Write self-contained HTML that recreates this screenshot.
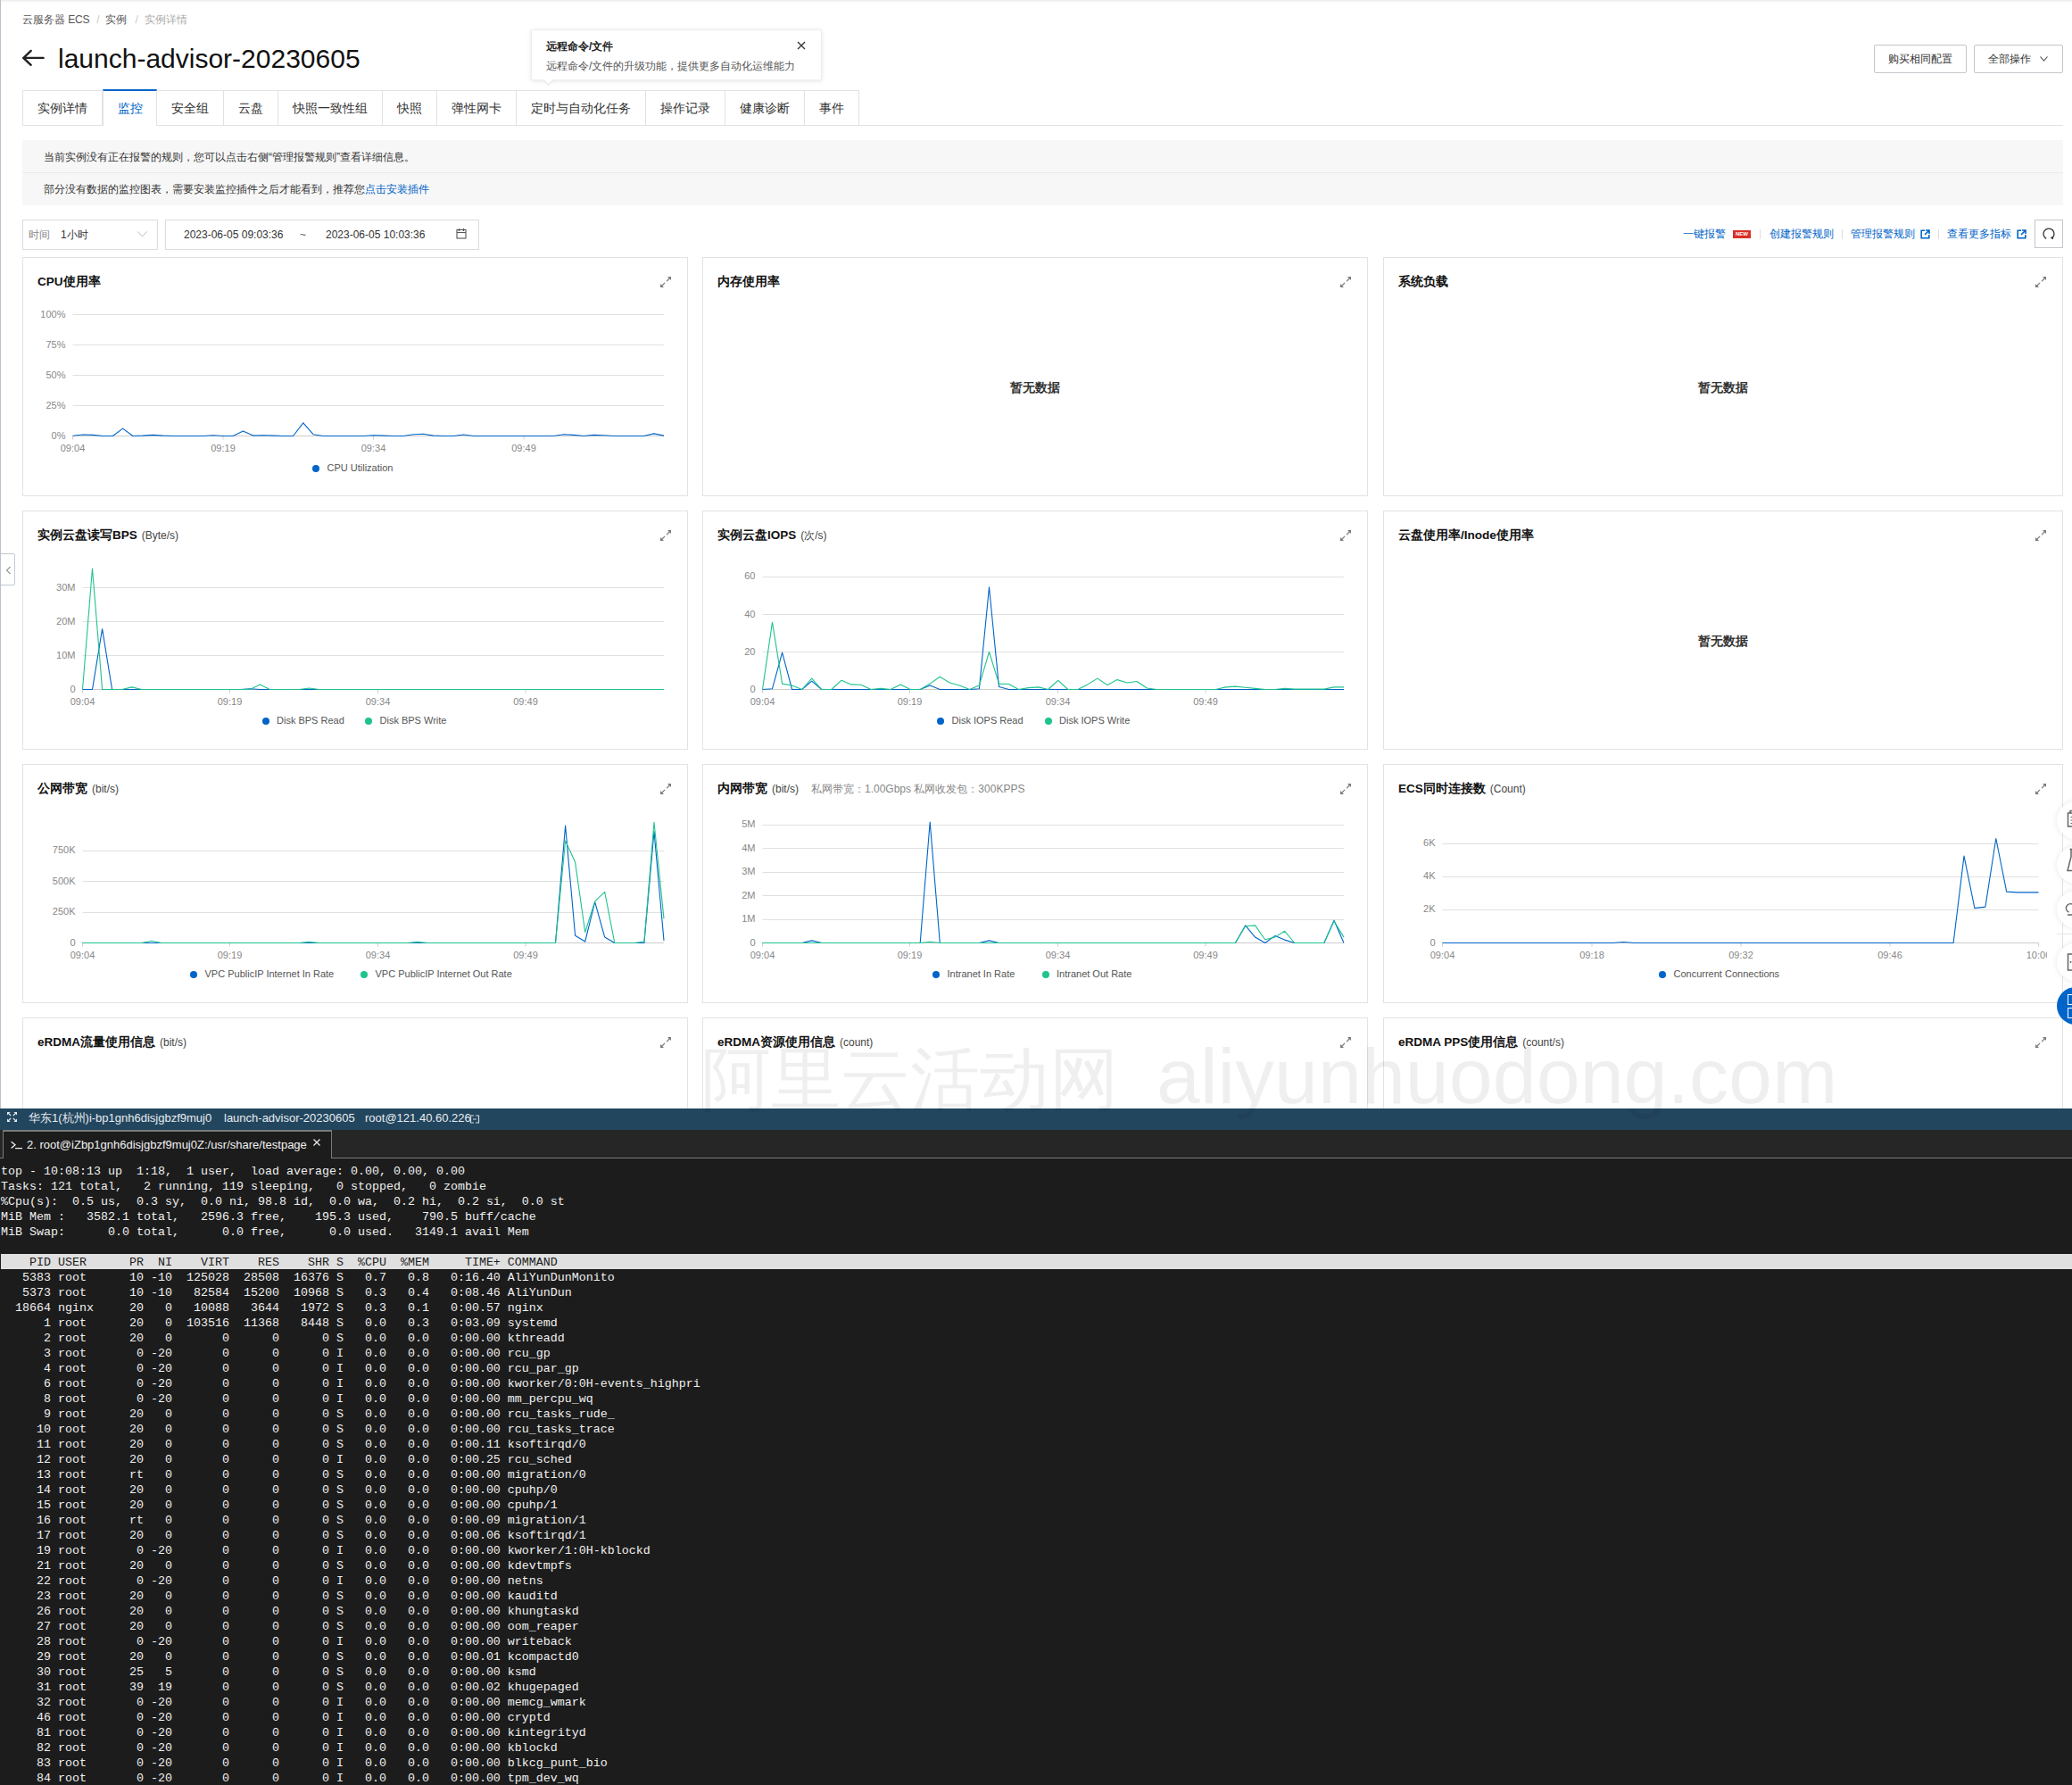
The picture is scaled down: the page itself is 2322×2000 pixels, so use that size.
<!DOCTYPE html><html><head><meta charset="utf-8"><title>ECS</title><style>
*{box-sizing:border-box}
html,body{margin:0;padding:0;width:2322px;height:2000px;overflow:hidden;background:#fff;font-family:"Liberation Sans",sans-serif;color:#333}
.a{position:absolute;white-space:nowrap}
.card{position:absolute;border:1px solid #e3e3e3;background:#fff}
.ct{position:absolute;left:14px;top:19px;font-size:13.5px;font-weight:bold;color:#111;line-height:16px;white-space:nowrap}
.ct span{font-weight:normal;font-size:12px;color:#444;margin-left:5px}
.ex{position:absolute;width:12px;height:12px}
.nd{position:absolute;font-size:14px;font-weight:bold;color:#333;line-height:16px;white-space:nowrap}
.yl{position:absolute;font-size:11px;color:#888;text-align:right;line-height:12px;width:40px}
.xl{position:absolute;font-size:11px;color:#888;line-height:12px;width:50px;text-align:center}
.lg{position:absolute;font-size:11px;color:#555;line-height:12px;white-space:nowrap}
.dot{display:inline-block;width:8px;height:8px;border-radius:50%;vertical-align:-1px;margin-right:8.5px}
.tab{position:absolute;top:101px;height:39px;border:1px solid #e2e2e2;border-bottom:none;background:#fff;font-size:14px;color:#333;text-align:center;line-height:38px}
.term{position:absolute;left:1px;top:1303px;font-family:"Liberation Mono",monospace;font-size:13.33px;line-height:17px;color:#f0f0f0;white-space:pre}
</style></head><body>
<div class="a" style="left:0;top:0;width:1px;height:1242px;background:#bcc1cb"></div>
<div class="a" style="left:1px;top:0;width:2321px;height:3px;background:linear-gradient(#ececec,#fff)"></div>
<div class="a" style="left:25px;top:15px;font-size:12px;line-height:14px;color:#555">云服务器 <span style="letter-spacing:-0.3px">ECS</span><span style="color:#c8c8c8;margin:0 7px 0 8px">/</span>实例<span style="color:#c8c8c8;margin:0 7px 0 9px">/</span><span style="color:#aaa">实例详情</span></div>
<svg class="a" style="left:20px;top:50px" width="40" height="32" viewBox="0 0 40 32"><path d="M28.6 14.9H6.5M14.7 6.9L6.3 14.9l8.4 7.9" fill="none" stroke="#222" stroke-width="2.4" stroke-linecap="round" stroke-linejoin="miter"/></svg>
<div class="a" style="left:65px;top:48px;font-size:30px;line-height:36px;color:#111">launch-advisor-20230605</div>
<div class="a" style="left:595px;top:33px;width:326px;height:57px;background:#fff;border:1px solid #eeeeee;box-shadow:0 1px 5px rgba(0,0,0,.10)"></div>
<div class="a" style="left:610px;top:85px;width:9px;height:9px;background:#fff;border-right:1px solid #dde0e4;border-bottom:1px solid #dde0e4;transform:rotate(45deg)"></div>
<div class="a" style="left:612px;top:45px;font-size:12px;font-weight:bold;color:#222;line-height:14px">远程命令/文件</div>
<div class="a" style="left:612px;top:66.5px;font-size:12px;color:#555;line-height:14px">远程命令/文件的升级功能，提供更多自动化运维能力</div>
<svg class="a" style="left:893px;top:46px" width="10" height="10" viewBox="0 0 10 10"><path d="M1 1L9 9M9 1L1 9" stroke="#333" stroke-width="1.3"/></svg>
<div class="a" style="left:2100px;top:50px;width:104px;height:32px;border:1px solid #c4c6cc;border-radius:2px;font-size:12px;line-height:30px;text-align:center;color:#333">购买相同配置</div>
<div class="a" style="left:2212px;top:50px;width:100px;height:32px;border:1px solid #c4c6cc;border-radius:2px;font-size:12px;line-height:30px;color:#333;padding-left:15px">全部操作<svg style="position:absolute;left:73px;top:12px" width="9" height="6" viewBox="0 0 9 6"><path d="M.5.5L4.5 5 8.5.5" fill="none" stroke="#444" stroke-width="1.1"/></svg></div>
<div class="a" style="left:25px;top:140px;width:2287px;height:1px;background:#e2e2e2"></div>
<div class="tab" style="left:25px;width:90px">实例详情</div>
<div class="tab" style="left:115px;width:61px;color:#0064c8;border-top:2px solid #0064c8;top:100px;height:41px;z-index:2">监控</div>
<div class="tab" style="left:175px;width:76px">安全组</div>
<div class="tab" style="left:250px;width:62px">云盘</div>
<div class="tab" style="left:311px;width:118px">快照一致性组</div>
<div class="tab" style="left:428px;width:62px">快照</div>
<div class="tab" style="left:489px;width:90px">弹性网卡</div>
<div class="tab" style="left:578px;width:146px">定时与自动化任务</div>
<div class="tab" style="left:723px;width:90px">操作记录</div>
<div class="tab" style="left:812px;width:90px">健康诊断</div>
<div class="tab" style="left:901px;width:62px">事件</div>
<div class="a" style="left:25px;top:157px;width:2287px;height:73px;background:#f7f7f7"></div>
<div class="a" style="left:25px;top:193px;width:2287px;height:1px;background:#e9e9e9"></div>
<div class="a" style="left:49px;top:169px;font-size:12px;line-height:14px;color:#333">当前实例没有正在报警的规则，您可以点击右侧“管理报警规则”查看详细信息。</div>
<div class="a" style="left:49px;top:205px;font-size:12px;line-height:14px;color:#333">部分没有数据的监控图表，需要安装监控插件之后才能看到，推荐您<span style="color:#0064c8">点击安装插件</span></div>
<div class="a" style="left:25px;top:246px;width:152px;height:34px;border:1px solid #dcdcdc"></div>
<div class="a" style="left:32px;top:256px;font-size:12px;line-height:14px;color:#888">时间</div>
<div class="a" style="left:68px;top:256px;font-size:12px;line-height:14px;color:#333">1小时</div>
<svg class="a" style="left:154px;top:259px" width="11" height="7" viewBox="0 0 11 7"><path d="M.5.5l5 5.5 5-5.5" fill="none" stroke="#bbb" stroke-width="1"/></svg>
<div class="a" style="left:185px;top:246px;width:352px;height:34px;border:1px solid #dcdcdc"></div>
<div class="a" style="left:206px;top:256px;font-size:12px;line-height:14px;color:#333">2023-06-05 09:03:36</div>
<div class="a" style="left:336px;top:256px;font-size:12px;line-height:14px;color:#555">~</div>
<div class="a" style="left:365px;top:256px;font-size:12px;line-height:14px;color:#333">2023-06-05 10:03:36</div>
<svg class="a" style="left:511px;top:255px" width="12" height="13" viewBox="0 0 12 13"><rect x="1" y="2.5" width="10" height="9.5" fill="none" stroke="#555" stroke-width="1.1"/><path d="M1 5.5h10M3.5 1v3M8.5 1v3" stroke="#555" stroke-width="1.1"/></svg>
<div class="a" style="left:1886px;top:255px;font-size:12px;line-height:14px;color:#0064c8">一键报警</div>
<div class="a" style="left:1942px;top:258px;width:20px;height:9px;background:#d93026;color:#fff;font-size:6px;line-height:9px;text-align:center;font-weight:bold">NEW</div>
<div class="a" style="left:1972px;top:257px;width:1px;height:11px;background:#ddd"></div>
<div class="a" style="left:1983px;top:255px;font-size:12px;line-height:14px;color:#0064c8">创建报警规则</div>
<div class="a" style="left:2064px;top:257px;width:1px;height:11px;background:#ddd"></div>
<div class="a" style="left:2074px;top:255px;font-size:12px;line-height:14px;color:#0064c8">管理报警规则</div>
<svg class="a" style="left:2152px;top:257px" width="11" height="11" viewBox="0 0 11 11"><path d="M5 1.2H1.2v8.6h8.6V6" fill="none" stroke="#0064c8" stroke-width="1.6"/><path d="M6 1h4v4M10 1L5 6" fill="none" stroke="#0064c8" stroke-width="1.6"/></svg>
<div class="a" style="left:2172px;top:257px;width:1px;height:11px;background:#ddd"></div>
<div class="a" style="left:2182px;top:255px;font-size:12px;line-height:14px;color:#0064c8">查看更多指标</div>
<svg class="a" style="left:2260px;top:257px" width="11" height="11" viewBox="0 0 11 11"><path d="M5 1.2H1.2v8.6h8.6V6" fill="none" stroke="#0064c8" stroke-width="1.6"/><path d="M6 1h4v4M10 1L5 6" fill="none" stroke="#0064c8" stroke-width="1.6"/></svg>
<div class="a" style="left:2280px;top:246px;width:32px;height:32px;border:1px solid #c4c6cc"></div>
<svg class="a" style="left:2289px;top:255px" width="14" height="14" viewBox="0 0 14 14"><path d="M4.2 12.4A6 6 0 1 1 10.6 11.9" fill="none" stroke="#333" stroke-width="1.3"/><path d="M8.6 11.6L11.8 13.2 12 9.6Z" fill="#333"/></svg>
<div class="card" style="left:25px;top:288px;width:746px;height:268px"></div>
<div class="ct" style="left:42px;top:308px">CPU使用率</div>
<svg class="a" style="left:740px;top:310px" width="12" height="12" viewBox="0 0 12 12"><path d="M8 0H12V4ZM0 8V12H4Z" fill="#7a7a7a"/><path d="M11 1L7.4 4.8M1 11L4.8 7.2" stroke="#7a7a7a" stroke-width="1.2" stroke-linecap="round"/></svg>
<div class="card" style="left:787px;top:288px;width:746px;height:268px"></div>
<div class="ct" style="left:804px;top:308px">内存使用率</div>
<svg class="a" style="left:1502px;top:310px" width="12" height="12" viewBox="0 0 12 12"><path d="M8 0H12V4ZM0 8V12H4Z" fill="#7a7a7a"/><path d="M11 1L7.4 4.8M1 11L4.8 7.2" stroke="#7a7a7a" stroke-width="1.2" stroke-linecap="round"/></svg>
<div class="card" style="left:1550px;top:288px;width:762px;height:268px"></div>
<div class="ct" style="left:1567px;top:308px">系统负载</div>
<svg class="a" style="left:2281px;top:310px" width="12" height="12" viewBox="0 0 12 12"><path d="M8 0H12V4ZM0 8V12H4Z" fill="#7a7a7a"/><path d="M11 1L7.4 4.8M1 11L4.8 7.2" stroke="#7a7a7a" stroke-width="1.2" stroke-linecap="round"/></svg>
<div class="card" style="left:25px;top:572px;width:746px;height:268px"></div>
<div class="ct" style="left:42px;top:592px">实例云盘读写BPS<span>(Byte/s)</span></div>
<svg class="a" style="left:740px;top:594px" width="12" height="12" viewBox="0 0 12 12"><path d="M8 0H12V4ZM0 8V12H4Z" fill="#7a7a7a"/><path d="M11 1L7.4 4.8M1 11L4.8 7.2" stroke="#7a7a7a" stroke-width="1.2" stroke-linecap="round"/></svg>
<div class="card" style="left:787px;top:572px;width:746px;height:268px"></div>
<div class="ct" style="left:804px;top:592px">实例云盘IOPS<span>(次/s)</span></div>
<svg class="a" style="left:1502px;top:594px" width="12" height="12" viewBox="0 0 12 12"><path d="M8 0H12V4ZM0 8V12H4Z" fill="#7a7a7a"/><path d="M11 1L7.4 4.8M1 11L4.8 7.2" stroke="#7a7a7a" stroke-width="1.2" stroke-linecap="round"/></svg>
<div class="card" style="left:1550px;top:572px;width:762px;height:268px"></div>
<div class="ct" style="left:1567px;top:592px">云盘使用率/Inode使用率</div>
<svg class="a" style="left:2281px;top:594px" width="12" height="12" viewBox="0 0 12 12"><path d="M8 0H12V4ZM0 8V12H4Z" fill="#7a7a7a"/><path d="M11 1L7.4 4.8M1 11L4.8 7.2" stroke="#7a7a7a" stroke-width="1.2" stroke-linecap="round"/></svg>
<div class="card" style="left:25px;top:856px;width:746px;height:268px"></div>
<div class="ct" style="left:42px;top:876px">公网带宽<span>(bit/s)</span></div>
<svg class="a" style="left:740px;top:878px" width="12" height="12" viewBox="0 0 12 12"><path d="M8 0H12V4ZM0 8V12H4Z" fill="#7a7a7a"/><path d="M11 1L7.4 4.8M1 11L4.8 7.2" stroke="#7a7a7a" stroke-width="1.2" stroke-linecap="round"/></svg>
<div class="card" style="left:787px;top:856px;width:746px;height:268px"></div>
<div class="ct" style="left:804px;top:876px">内网带宽<span>(bit/s)</span><span style="margin-left:14px;color:#888">私网带宽：1.00Gbps 私网收发包：300KPPS</span></div>
<svg class="a" style="left:1502px;top:878px" width="12" height="12" viewBox="0 0 12 12"><path d="M8 0H12V4ZM0 8V12H4Z" fill="#7a7a7a"/><path d="M11 1L7.4 4.8M1 11L4.8 7.2" stroke="#7a7a7a" stroke-width="1.2" stroke-linecap="round"/></svg>
<div class="card" style="left:1550px;top:856px;width:762px;height:268px"></div>
<div class="ct" style="left:1567px;top:876px">ECS同时连接数<span>(Count)</span></div>
<svg class="a" style="left:2281px;top:878px" width="12" height="12" viewBox="0 0 12 12"><path d="M8 0H12V4ZM0 8V12H4Z" fill="#7a7a7a"/><path d="M11 1L7.4 4.8M1 11L4.8 7.2" stroke="#7a7a7a" stroke-width="1.2" stroke-linecap="round"/></svg>
<div class="card" style="left:25px;top:1140px;width:746px;height:268px"></div>
<div class="ct" style="left:42px;top:1160px">eRDMA流量使用信息<span>(bit/s)</span></div>
<svg class="a" style="left:740px;top:1162px" width="12" height="12" viewBox="0 0 12 12"><path d="M8 0H12V4ZM0 8V12H4Z" fill="#7a7a7a"/><path d="M11 1L7.4 4.8M1 11L4.8 7.2" stroke="#7a7a7a" stroke-width="1.2" stroke-linecap="round"/></svg>
<div class="card" style="left:787px;top:1140px;width:746px;height:268px"></div>
<div class="ct" style="left:804px;top:1160px">eRDMA资源使用信息<span>(count)</span></div>
<svg class="a" style="left:1502px;top:1162px" width="12" height="12" viewBox="0 0 12 12"><path d="M8 0H12V4ZM0 8V12H4Z" fill="#7a7a7a"/><path d="M11 1L7.4 4.8M1 11L4.8 7.2" stroke="#7a7a7a" stroke-width="1.2" stroke-linecap="round"/></svg>
<div class="card" style="left:1550px;top:1140px;width:762px;height:268px"></div>
<div class="ct" style="left:1567px;top:1160px">eRDMA PPS使用信息<span>(count/s)</span></div>
<svg class="a" style="left:2281px;top:1162px" width="12" height="12" viewBox="0 0 12 12"><path d="M8 0H12V4ZM0 8V12H4Z" fill="#7a7a7a"/><path d="M11 1L7.4 4.8M1 11L4.8 7.2" stroke="#7a7a7a" stroke-width="1.2" stroke-linecap="round"/></svg>
<div class="nd" style="left:1120px;top:426px;width:80px;text-align:center">暂无数据</div>
<div class="nd" style="left:1891px;top:426px;width:80px;text-align:center">暂无数据</div>
<div class="nd" style="left:1891px;top:710px;width:80px;text-align:center">暂无数据</div>
<div class="yl" style="left:33.5px;top:345.5px">100%</div>
<div class="yl" style="left:33.5px;top:379.5px">75%</div>
<div class="yl" style="left:33.5px;top:413.5px">50%</div>
<div class="yl" style="left:33.5px;top:447.5px">25%</div>
<div class="yl" style="left:33.5px;top:481.5px">0%</div>
<div class="xl" style="left:56.5px;top:495.5px">09:04</div>
<div class="xl" style="left:225px;top:495.5px">09:19</div>
<div class="xl" style="left:393.5px;top:495.5px">09:34</div>
<div class="xl" style="left:562px;top:495.5px">09:49</div>
<div class="lg" style="left:350px;top:518px"><span class="dot" style="background:#0064c8"></span>CPU Utilization</div>
<div class="yl" style="left:44.5px;top:651.5px">30M</div>
<div class="yl" style="left:44.5px;top:689.5px">20M</div>
<div class="yl" style="left:44.5px;top:727.5px">10M</div>
<div class="yl" style="left:44.5px;top:765.5px">0</div>
<div class="xl" style="left:67.5px;top:779.5px">09:04</div>
<div class="xl" style="left:232.5px;top:779.5px">09:19</div>
<div class="xl" style="left:398.5px;top:779.5px">09:34</div>
<div class="xl" style="left:564px;top:779.5px">09:49</div>
<div class="lg" style="left:293.5px;top:801px"><span class="dot" style="background:#0064c8"></span>Disk BPS Read</div>
<div class="lg" style="left:409px;top:801px"><span class="dot" style="background:#1fc38f"></span>Disk BPS Write</div>
<div class="yl" style="left:806.5px;top:639px">60</div>
<div class="yl" style="left:806.5px;top:681.5px">40</div>
<div class="yl" style="left:806.5px;top:723.5px">20</div>
<div class="yl" style="left:806.5px;top:765.5px">0</div>
<div class="xl" style="left:829.5px;top:779.5px">09:04</div>
<div class="xl" style="left:994.5px;top:779.5px">09:19</div>
<div class="xl" style="left:1160.5px;top:779.5px">09:34</div>
<div class="xl" style="left:1326px;top:779.5px">09:49</div>
<div class="lg" style="left:1050px;top:801px"><span class="dot" style="background:#0064c8"></span>Disk IOPS Read</div>
<div class="lg" style="left:1170.5px;top:801px"><span class="dot" style="background:#1fc38f"></span>Disk IOPS Write</div>
<div class="yl" style="left:44.5px;top:946px">750K</div>
<div class="yl" style="left:44.5px;top:980.5px">500K</div>
<div class="yl" style="left:44.5px;top:1015px">250K</div>
<div class="yl" style="left:44.5px;top:1049.5px">0</div>
<div class="xl" style="left:67.5px;top:1063.5px">09:04</div>
<div class="xl" style="left:232.5px;top:1063.5px">09:19</div>
<div class="xl" style="left:398.5px;top:1063.5px">09:34</div>
<div class="xl" style="left:564px;top:1063.5px">09:49</div>
<div class="lg" style="left:213px;top:1085px"><span class="dot" style="background:#0064c8"></span>VPC PublicIP Internet In Rate</div>
<div class="lg" style="left:404px;top:1085px"><span class="dot" style="background:#1fc38f"></span>VPC PublicIP Internet Out Rate</div>
<div class="yl" style="left:806.5px;top:917px">5M</div>
<div class="yl" style="left:806.5px;top:943.5px">4M</div>
<div class="yl" style="left:806.5px;top:970px">3M</div>
<div class="yl" style="left:806.5px;top:996.5px">2M</div>
<div class="yl" style="left:806.5px;top:1023px">1M</div>
<div class="yl" style="left:806.5px;top:1049.5px">0</div>
<div class="xl" style="left:829.5px;top:1063.5px">09:04</div>
<div class="xl" style="left:994.5px;top:1063.5px">09:19</div>
<div class="xl" style="left:1160.5px;top:1063.5px">09:34</div>
<div class="xl" style="left:1326px;top:1063.5px">09:49</div>
<div class="lg" style="left:1045px;top:1085px"><span class="dot" style="background:#0064c8"></span>Intranet In Rate</div>
<div class="lg" style="left:1167.5px;top:1085px"><span class="dot" style="background:#1fc38f"></span>Intranet Out Rate</div>
<div class="yl" style="left:1568.5px;top:938px">6K</div>
<div class="yl" style="left:1568.5px;top:975px">4K</div>
<div class="yl" style="left:1568.5px;top:1012px">2K</div>
<div class="yl" style="left:1568.5px;top:1049.5px">0</div>
<div class="xl" style="left:1591.5px;top:1063.5px">09:04</div>
<div class="xl" style="left:1759px;top:1063.5px">09:18</div>
<div class="xl" style="left:1926px;top:1063.5px">09:32</div>
<div class="xl" style="left:2093px;top:1063.5px">09:46</div>
<div class="a" style="left:2259.5px;top:1063.5px;width:34.5px;height:14px;overflow:hidden"><div class="xl" style="left:0;top:0">10:00</div></div>
<div class="lg" style="left:1859px;top:1085px"><span class="dot" style="background:#0064c8"></span>Concurrent Connections</div>
<svg class="a" style="left:0;top:0" width="2322" height="1242" viewBox="0 0 2322 1242"><line x1="81.5" y1="352.5" x2="744" y2="352.5" stroke="#e0e0e0" stroke-width="1"/><line x1="81.5" y1="386.5" x2="744" y2="386.5" stroke="#e0e0e0" stroke-width="1"/><line x1="81.5" y1="420.5" x2="744" y2="420.5" stroke="#e0e0e0" stroke-width="1"/><line x1="81.5" y1="454.5" x2="744" y2="454.5" stroke="#e0e0e0" stroke-width="1"/><line x1="81.5" y1="488.5" x2="744" y2="488.5" stroke="#cccccc" stroke-width="1"/><line x1="81.5" y1="488.5" x2="81.5" y2="492.5" stroke="#cfcfcf" stroke-width="1"/><line x1="250" y1="488.5" x2="250" y2="492.5" stroke="#cfcfcf" stroke-width="1"/><line x1="418.5" y1="488.5" x2="418.5" y2="492.5" stroke="#cfcfcf" stroke-width="1"/><line x1="587" y1="488.5" x2="587" y2="492.5" stroke="#cfcfcf" stroke-width="1"/><polyline points="81.5,488.2 92.7,487.0 104.0,487.4 115.2,488.5 126.4,488.5 137.6,480.1 148.9,488.5 160.1,488.1 171.3,487.4 182.6,488.1 193.8,488.5 205.0,488.5 216.2,488.5 227.5,488.5 238.7,487.8 249.9,488.5 261.2,488.5 272.4,483.0 283.6,488.1 294.8,487.8 306.1,488.1 317.3,488.5 328.5,488.5 339.8,473.8 351.0,486.7 362.2,488.5 373.4,488.5 384.7,488.5 395.9,488.5 407.1,488.5 418.4,487.8 429.6,488.1 440.8,488.5 452.1,488.5 463.3,486.7 474.5,486.3 485.7,488.1 497.0,488.5 508.2,488.5 519.4,487.0 530.7,488.5 541.9,488.5 553.1,488.5 564.3,488.5 575.6,488.5 586.8,488.5 598.0,488.5 609.3,488.5 620.5,488.5 631.7,486.7 642.9,487.4 654.2,488.5 665.4,487.4 676.6,487.8 687.9,488.5 699.1,488.5 710.3,488.5 721.5,488.5 732.8,485.9 744.0,488.1" fill="none" stroke="#0064c8" stroke-width="1.1" stroke-linejoin="round"/><line x1="92.5" y1="658.5" x2="744" y2="658.5" stroke="#e0e0e0" stroke-width="1"/><line x1="92.5" y1="696.5" x2="744" y2="696.5" stroke="#e0e0e0" stroke-width="1"/><line x1="92.5" y1="734.5" x2="744" y2="734.5" stroke="#e0e0e0" stroke-width="1"/><line x1="92.5" y1="772.5" x2="744" y2="772.5" stroke="#cccccc" stroke-width="1"/><line x1="92.5" y1="772.5" x2="92.5" y2="776.5" stroke="#cfcfcf" stroke-width="1"/><line x1="257.5" y1="772.5" x2="257.5" y2="776.5" stroke="#cfcfcf" stroke-width="1"/><line x1="423.5" y1="772.5" x2="423.5" y2="776.5" stroke="#cfcfcf" stroke-width="1"/><line x1="589" y1="772.5" x2="589" y2="776.5" stroke="#cfcfcf" stroke-width="1"/><polyline points="92.5,772.5 103.5,772.5 114.6,704.7 125.6,772.5 136.7,772.5 147.7,772.5 158.8,772.5 169.8,772.5 180.8,772.5 191.9,772.5 202.9,772.5 214.0,772.5 225.0,772.5 236.1,772.5 247.1,772.5 258.1,772.5 269.2,772.5 280.2,771.7 291.3,772.5 302.3,772.5 313.3,772.5 324.4,772.5 335.4,772.5 346.5,772.5 357.5,772.5 368.6,772.5 379.6,772.5 390.6,772.5 401.7,772.5 412.7,772.5 423.8,772.5 434.8,772.5 445.9,772.5 456.9,772.5 467.9,772.5 479.0,772.5 490.0,772.5 501.1,772.5 512.1,772.5 523.2,772.5 534.2,772.5 545.2,772.5 556.3,772.5 567.3,772.5 578.4,772.5 589.4,772.5 600.4,772.5 611.5,772.5 622.5,772.5 633.6,772.5 644.6,772.5 655.7,772.5 666.7,772.5 677.7,772.5 688.8,772.5 699.8,772.5 710.9,772.5 721.9,772.5 733.0,772.5 744.0,772.5" fill="none" stroke="#0064c8" stroke-width="1.1" stroke-linejoin="round"/><polyline points="92.5,772.5 103.5,637.0 114.6,772.5 125.6,772.5 136.7,772.5 147.7,769.9 158.8,772.5 169.8,772.5 180.8,772.5 191.9,772.5 202.9,772.5 214.0,772.5 225.0,772.5 236.1,772.5 247.1,772.5 258.1,772.5 269.2,772.5 280.2,772.5 291.3,766.9 302.3,772.5 313.3,772.5 324.4,772.5 335.4,772.5 346.5,771.0 357.5,772.5 368.6,772.5 379.6,772.5 390.6,772.5 401.7,772.5 412.7,772.5 423.8,772.5 434.8,772.5 445.9,772.5 456.9,772.5 467.9,772.5 479.0,772.5 490.0,772.5 501.1,772.5 512.1,772.5 523.2,772.5 534.2,772.5 545.2,772.5 556.3,772.5 567.3,772.5 578.4,772.5 589.4,772.5 600.4,772.5 611.5,772.5 622.5,772.5 633.6,772.5 644.6,772.5 655.7,772.5 666.7,772.5 677.7,772.5 688.8,772.5 699.8,772.5 710.9,772.5 721.9,772.5 733.0,772.5 744.0,772.5" fill="none" stroke="#1fc38f" stroke-width="1.1" stroke-linejoin="round"/><line x1="854.5" y1="646.5" x2="1506" y2="646.5" stroke="#e0e0e0" stroke-width="1"/><line x1="854.5" y1="688.5" x2="1506" y2="688.5" stroke="#e0e0e0" stroke-width="1"/><line x1="854.5" y1="730.5" x2="1506" y2="730.5" stroke="#e0e0e0" stroke-width="1"/><line x1="854.5" y1="772.5" x2="1506" y2="772.5" stroke="#cccccc" stroke-width="1"/><line x1="854.5" y1="772.5" x2="854.5" y2="776.5" stroke="#cfcfcf" stroke-width="1"/><line x1="1019.5" y1="772.5" x2="1019.5" y2="776.5" stroke="#cfcfcf" stroke-width="1"/><line x1="1185.5" y1="772.5" x2="1185.5" y2="776.5" stroke="#cfcfcf" stroke-width="1"/><line x1="1351" y1="772.5" x2="1351" y2="776.5" stroke="#cfcfcf" stroke-width="1"/><polyline points="854.5,772.5 865.5,771.7 876.6,731.1 887.6,772.5 898.7,772.5 909.7,763.1 920.8,772.5 931.8,772.5 942.8,772.5 953.9,772.5 964.9,772.5 976.0,772.5 987.0,772.5 998.1,772.5 1009.1,772.5 1020.1,772.5 1031.2,772.5 1042.2,768.0 1053.3,772.5 1064.3,772.5 1075.3,772.5 1086.4,772.5 1097.4,771.7 1108.5,657.7 1119.5,769.5 1130.6,772.5 1141.6,772.5 1152.6,772.5 1163.7,772.5 1174.7,772.5 1185.8,772.5 1196.8,772.5 1207.9,772.5 1218.9,772.5 1229.9,772.5 1241.0,772.5 1252.0,772.5 1263.1,772.5 1274.1,772.5 1285.2,772.5 1296.2,772.5 1307.2,772.5 1318.3,772.5 1329.3,772.5 1340.4,772.5 1351.4,772.5 1362.4,772.5 1373.5,772.5 1384.5,772.5 1395.6,772.5 1406.6,772.5 1417.7,772.5 1428.7,772.5 1439.7,772.5 1450.8,772.5 1461.8,772.5 1472.9,772.5 1483.9,772.5 1495.0,772.5 1506.0,772.5" fill="none" stroke="#0064c8" stroke-width="1.1" stroke-linejoin="round"/><polyline points="854.5,772.5 865.5,697.2 876.6,766.1 887.6,768.0 898.7,772.5 909.7,760.1 920.8,772.5 931.8,772.5 942.8,762.3 953.9,766.9 964.9,767.2 976.0,772.5 987.0,771.4 998.1,772.5 1009.1,766.9 1020.1,772.5 1031.2,772.5 1042.2,766.1 1053.3,758.2 1064.3,765.0 1075.3,768.0 1086.4,772.5 1097.4,768.0 1108.5,730.3 1119.5,766.1 1130.6,766.5 1141.6,772.5 1152.6,770.6 1163.7,769.9 1174.7,772.5 1185.8,762.3 1196.8,772.5 1207.9,772.5 1218.9,766.9 1229.9,760.1 1241.0,767.6 1252.0,761.6 1263.1,765.0 1274.1,763.5 1285.2,771.0 1296.2,772.5 1307.2,772.5 1318.3,772.5 1329.3,772.5 1340.4,772.5 1351.4,772.5 1362.4,772.5 1373.5,769.9 1384.5,769.1 1395.6,770.2 1406.6,771.4 1417.7,772.5 1428.7,772.5 1439.7,771.4 1450.8,772.1 1461.8,772.1 1472.9,772.1 1483.9,772.1 1495.0,769.9 1506.0,769.9" fill="none" stroke="#1fc38f" stroke-width="1.1" stroke-linejoin="round"/><line x1="92.5" y1="953.5" x2="744" y2="953.5" stroke="#e0e0e0" stroke-width="1"/><line x1="92.5" y1="987.5" x2="744" y2="987.5" stroke="#e0e0e0" stroke-width="1"/><line x1="92.5" y1="1022.5" x2="744" y2="1022.5" stroke="#e0e0e0" stroke-width="1"/><line x1="92.5" y1="1056.5" x2="744" y2="1056.5" stroke="#cccccc" stroke-width="1"/><line x1="92.5" y1="1056.5" x2="92.5" y2="1060.5" stroke="#cfcfcf" stroke-width="1"/><line x1="257.5" y1="1056.5" x2="257.5" y2="1060.5" stroke="#cfcfcf" stroke-width="1"/><line x1="423.5" y1="1056.5" x2="423.5" y2="1060.5" stroke="#cfcfcf" stroke-width="1"/><line x1="589" y1="1056.5" x2="589" y2="1060.5" stroke="#cfcfcf" stroke-width="1"/><polyline points="92.5,1056.5 103.5,1056.5 114.6,1056.5 125.6,1056.5 136.7,1056.5 147.7,1056.5 158.8,1056.5 169.8,1056.5 180.8,1056.5 191.9,1056.5 202.9,1056.5 214.0,1056.5 225.0,1056.5 236.1,1056.5 247.1,1056.5 258.1,1056.5 269.2,1056.5 280.2,1056.5 291.3,1056.5 302.3,1056.5 313.3,1056.5 324.4,1056.5 335.4,1056.5 346.5,1056.5 357.5,1056.5 368.6,1056.5 379.6,1056.5 390.6,1056.5 401.7,1056.5 412.7,1056.5 423.8,1056.5 434.8,1056.5 445.9,1056.5 456.9,1056.5 467.9,1056.5 479.0,1056.5 490.0,1056.5 501.1,1056.5 512.1,1056.5 523.2,1056.5 534.2,1056.5 545.2,1056.5 556.3,1056.5 567.3,1056.5 578.4,1056.5 589.4,1056.5 600.4,1056.5 611.5,1056.5 622.5,1056.5 633.6,925.1 644.6,1048.2 655.7,1055.0 666.7,1010.6 677.7,1050.1 688.8,1056.5 699.8,1056.5 710.9,1056.5 721.9,1056.5 733.0,931.5 744.0,1053.9" fill="none" stroke="#0064c8" stroke-width="1.1" stroke-linejoin="round"/><polyline points="92.5,1056.5 103.5,1056.5 114.6,1056.5 125.6,1056.5 136.7,1056.5 147.7,1056.5 158.8,1056.5 169.8,1054.2 180.8,1056.5 191.9,1056.5 202.9,1056.5 214.0,1056.5 225.0,1056.5 236.1,1056.5 247.1,1056.5 258.1,1056.5 269.2,1056.5 280.2,1056.5 291.3,1056.5 302.3,1056.5 313.3,1056.5 324.4,1056.5 335.4,1056.5 346.5,1055.4 357.5,1056.5 368.6,1056.5 379.6,1056.5 390.6,1056.5 401.7,1056.5 412.7,1056.5 423.8,1056.5 434.8,1056.5 445.9,1056.5 456.9,1056.5 467.9,1055.4 479.0,1056.5 490.0,1056.5 501.1,1056.5 512.1,1056.5 523.2,1056.5 534.2,1056.5 545.2,1056.5 556.3,1056.5 567.3,1056.5 578.4,1056.5 589.4,1056.5 600.4,1056.5 611.5,1056.5 622.5,1056.5 633.6,942.0 644.6,966.1 655.7,1044.5 666.7,1009.8 677.7,999.3 688.8,1056.5 699.8,1056.5 710.9,1056.5 721.9,1055.0 733.0,921.3 744.0,1029.4" fill="none" stroke="#1fc38f" stroke-width="1.1" stroke-linejoin="round"/><line x1="854.5" y1="924.5" x2="1506" y2="924.5" stroke="#e0e0e0" stroke-width="1"/><line x1="854.5" y1="950.5" x2="1506" y2="950.5" stroke="#e0e0e0" stroke-width="1"/><line x1="854.5" y1="977.5" x2="1506" y2="977.5" stroke="#e0e0e0" stroke-width="1"/><line x1="854.5" y1="1003.5" x2="1506" y2="1003.5" stroke="#e0e0e0" stroke-width="1"/><line x1="854.5" y1="1030.5" x2="1506" y2="1030.5" stroke="#e0e0e0" stroke-width="1"/><line x1="854.5" y1="1056.5" x2="1506" y2="1056.5" stroke="#cccccc" stroke-width="1"/><line x1="854.5" y1="1056.5" x2="854.5" y2="1060.5" stroke="#cfcfcf" stroke-width="1"/><line x1="1019.5" y1="1056.5" x2="1019.5" y2="1060.5" stroke="#cfcfcf" stroke-width="1"/><line x1="1185.5" y1="1056.5" x2="1185.5" y2="1060.5" stroke="#cfcfcf" stroke-width="1"/><line x1="1351" y1="1056.5" x2="1351" y2="1060.5" stroke="#cfcfcf" stroke-width="1"/><polyline points="854.5,1056.5 865.5,1056.5 876.6,1056.5 887.6,1056.5 898.7,1056.5 909.7,1053.9 920.8,1056.5 931.8,1056.5 942.8,1056.5 953.9,1056.5 964.9,1056.5 976.0,1056.5 987.0,1056.5 998.1,1056.5 1009.1,1056.5 1020.1,1056.5 1031.2,1056.5 1042.2,921.0 1053.3,1056.5 1064.3,1056.5 1075.3,1056.5 1086.4,1056.5 1097.4,1056.5 1108.5,1053.9 1119.5,1056.5 1130.6,1056.5 1141.6,1056.5 1152.6,1056.5 1163.7,1056.5 1174.7,1056.5 1185.8,1056.5 1196.8,1056.5 1207.9,1056.5 1218.9,1056.5 1229.9,1056.5 1241.0,1056.5 1252.0,1056.5 1263.1,1056.5 1274.1,1056.5 1285.2,1056.5 1296.2,1056.5 1307.2,1056.5 1318.3,1056.5 1329.3,1056.5 1340.4,1056.5 1351.4,1056.5 1362.4,1056.5 1373.5,1056.5 1384.5,1056.5 1395.6,1036.9 1406.6,1050.1 1417.7,1056.5 1428.7,1048.6 1439.7,1053.1 1450.8,1056.5 1461.8,1056.5 1472.9,1056.5 1483.9,1056.5 1495.0,1031.3 1506.0,1056.5" fill="none" stroke="#0064c8" stroke-width="1.1" stroke-linejoin="round"/><polyline points="854.5,1056.5 865.5,1056.5 876.6,1056.5 887.6,1056.5 898.7,1056.5 909.7,1056.5 920.8,1056.5 931.8,1056.5 942.8,1056.5 953.9,1056.5 964.9,1056.5 976.0,1056.5 987.0,1056.5 998.1,1056.5 1009.1,1056.5 1020.1,1056.5 1031.2,1056.5 1042.2,1055.4 1053.3,1056.5 1064.3,1056.5 1075.3,1056.5 1086.4,1056.5 1097.4,1056.5 1108.5,1056.5 1119.5,1056.5 1130.6,1056.5 1141.6,1056.5 1152.6,1056.5 1163.7,1056.5 1174.7,1056.5 1185.8,1056.5 1196.8,1056.5 1207.9,1056.5 1218.9,1056.5 1229.9,1056.5 1241.0,1056.5 1252.0,1056.5 1263.1,1056.5 1274.1,1056.5 1285.2,1056.5 1296.2,1056.5 1307.2,1056.5 1318.3,1056.5 1329.3,1056.5 1340.4,1056.5 1351.4,1056.5 1362.4,1056.5 1373.5,1056.5 1384.5,1056.5 1395.6,1037.7 1406.6,1036.9 1417.7,1052.7 1428.7,1050.1 1439.7,1043.3 1450.8,1056.5 1461.8,1056.5 1472.9,1056.5 1483.9,1056.5 1495.0,1032.0 1506.0,1050.1" fill="none" stroke="#1fc38f" stroke-width="1.1" stroke-linejoin="round"/><line x1="1616.5" y1="945.5" x2="2284.5" y2="945.5" stroke="#e0e0e0" stroke-width="1"/><line x1="1616.5" y1="982.5" x2="2284.5" y2="982.5" stroke="#e0e0e0" stroke-width="1"/><line x1="1616.5" y1="1019.5" x2="2284.5" y2="1019.5" stroke="#e0e0e0" stroke-width="1"/><line x1="1616.5" y1="1056.5" x2="2284.5" y2="1056.5" stroke="#cccccc" stroke-width="1"/><line x1="1616.5" y1="1056.5" x2="1616.5" y2="1060.5" stroke="#cfcfcf" stroke-width="1"/><line x1="1784" y1="1056.5" x2="1784" y2="1060.5" stroke="#cfcfcf" stroke-width="1"/><line x1="1951" y1="1056.5" x2="1951" y2="1060.5" stroke="#cfcfcf" stroke-width="1"/><line x1="2118" y1="1056.5" x2="2118" y2="1060.5" stroke="#cfcfcf" stroke-width="1"/><line x1="2284.5" y1="1056.5" x2="2284.5" y2="1060.5" stroke="#cfcfcf" stroke-width="1"/><polyline points="1616.5,1056.5 1628.4,1056.5 1640.4,1056.5 1652.3,1056.5 1664.2,1056.5 1676.1,1056.5 1688.1,1056.5 1700.0,1056.5 1711.9,1056.5 1723.9,1056.5 1735.8,1056.5 1747.7,1056.5 1759.6,1056.5 1771.6,1056.5 1783.5,1056.5 1795.4,1056.5 1807.4,1056.5 1819.3,1055.5 1831.2,1056.5 1843.1,1056.5 1855.1,1056.5 1867.0,1056.5 1878.9,1056.5 1890.9,1056.5 1902.8,1056.5 1914.7,1056.5 1926.6,1056.5 1938.6,1056.5 1950.5,1056.5 1962.4,1056.5 1974.4,1056.5 1986.3,1056.5 1998.2,1056.5 2010.1,1056.5 2022.1,1056.5 2034.0,1056.5 2045.9,1056.5 2057.9,1056.5 2069.8,1056.5 2081.7,1056.5 2093.6,1056.5 2105.6,1056.5 2117.5,1056.5 2129.4,1056.5 2141.4,1056.5 2153.3,1056.5 2165.2,1056.5 2177.1,1056.5 2189.1,1056.5 2201.0,959.1 2212.9,1017.6 2224.9,1016.1 2236.8,939.5 2248.7,999.1 2260.6,999.9 2272.6,999.9 2284.5,999.9" fill="none" stroke="#0064c8" stroke-width="1.1" stroke-linejoin="round"/></svg>
<div class="a" style="left:1px;top:620px;width:16px;height:36px;border:1px solid #c3c8d0;border-left:none;border-radius:0 2px 2px 0;background:#fff"></div>
<svg class="a" style="left:6px;top:634px" width="7" height="10" viewBox="0 0 7 10"><path d="M5.5 1L1.5 5l4 4" fill="none" stroke="#3a3f4a" stroke-width="0.9"/></svg>
<div class="a" style="left:2305px;top:898px;width:42px;height:42px;border-radius:50%;background:#fff;box-shadow:0 0 6px rgba(0,0,0,.10)"></div>
<div class="a" style="left:2305px;top:948px;width:42px;height:42px;border-radius:50%;background:#fff;box-shadow:0 0 6px rgba(0,0,0,.10)"></div>
<div class="a" style="left:2305px;top:998px;width:42px;height:42px;border-radius:50%;background:#fff;box-shadow:0 0 6px rgba(0,0,0,.10)"></div>
<div class="a" style="left:2305px;top:1057px;width:42px;height:42px;border-radius:50%;background:#fff;box-shadow:0 0 6px rgba(0,0,0,.10)"></div>
<svg class="a" style="left:2300px;top:890px;z-index:5" width="22" height="210" viewBox="2300 890 22 210"><path d="M17.5 0" /><path d="M2322 911H2317.5V926H2322M2320 911V908.5H2322" fill="none" stroke="#666" stroke-width="1.5"/><path d="M2320.5 915.5H2322M2320.5 919H2322M2320.5 922.5H2322" stroke="#666" stroke-width="1.2"/><path d="M2322 951.5H2319.5M2321 952V960L2317 975.5H2322" fill="none" stroke="#666" stroke-width="1.5"/><path d="M2317 1025H2322M2318.5 1022A4.5 4.5 0 0 1 2322 1013" fill="none" stroke="#666" stroke-width="1.5"/><path d="M2322 1069H2317.5V1087H2322" fill="none" stroke="#666" stroke-width="1.5"/><circle cx="2320.5" cy="1078" r="1" fill="#666"/></svg>
<div class="a" style="left:2305px;top:1046px;width:17px;height:1px;background:#e6e6e6"></div>
<div class="a" style="left:2305px;top:1106px;width:42px;height:42px;border-radius:50%;background:#0064c8"></div>
<div class="a" style="left:2317px;top:1114px;width:8px;height:12px;border:1.6px solid #fff"></div><div class="a" style="left:2317px;top:1129px;width:8px;height:12px;border:1.6px solid #fff"></div>
<div class="a" style="left:0;top:1242px;width:2322px;height:758px;background:#1c1c1c"></div>
<div class="a" style="left:0;top:1242px;width:2322px;height:24px;background:#23465f"></div>
<svg class="a" style="left:7px;top:1245px" width="13" height="13" viewBox="0 0 13 13"><path d="M2 2L5.2 5M11 2L7.8 5M2 11L5.2 8M11 11L7.8 8" stroke="#e6eaee" stroke-width="1.1"/><path d="M1 1H4.6L1 4.6ZM12 1H8.4L12 4.6ZM1 12H4.6L1 8.4ZM12 12H8.4L12 8.4Z" fill="#e6eaee"/></svg>
<div class="a" style="left:32px;top:1245px;font-size:13px;line-height:15px;color:#e8ecef">华东1(杭州)i-bp1gnh6disjgbzf9muj0</div>
<div class="a" style="left:251px;top:1245px;font-size:13px;line-height:15px;color:#e8ecef">launch-advisor-20230605</div>
<div class="a" style="left:409px;top:1245px;font-size:13px;line-height:15px;color:#e8ecef">root@121.40.60.226</div>
<svg class="a" style="left:526px;top:1249px" width="12" height="10" viewBox="0 0 12 10"><path d="M5 1H1.5v8H5M7 1h3.5v8H7M4 5h4" fill="none" stroke="#cfd6dd" stroke-width="1.2"/></svg>
<div class="a" style="left:0;top:1266px;width:2322px;height:32px;background:#262626"></div>
<div class="a" style="left:371px;top:1297px;width:1951px;height:1px;background:#7a7a7a"></div>
<div class="a" style="left:3px;top:1266px;width:369px;height:32px;background:#1c1c1c;border:2px solid #7a7a7a;border-bottom:none;border-top-width:2px;border-left-width:1px;border-right-width:1px"></div>
<svg class="a" style="left:10px;top:1276px" width="18" height="14" viewBox="0 0 18 14"><path d="M2.6 3.2L7 6.8 2.6 10.4" fill="none" stroke="#f2f2f2" stroke-width="1.3"/><path d="M7 10.6H15" stroke="#f2f2f2" stroke-width="1.2"/></svg>
<div class="a" style="left:0;top:1297px;width:4px;height:1px;background:#7a7a7a"></div>
<div class="a" style="left:30px;top:1275px;font-size:13px;line-height:15px;color:#f2f2f2">2. root@iZbp1gnh6disjgbzf9muj0Z:/usr/share/testpage</div>
<svg class="a" style="left:351px;top:1276px" width="8" height="8" viewBox="0 0 8 8"><path d="M.5.5l7 7M7.5.5l-7 7" stroke="#eee" stroke-width="1.2"/></svg>
<div class="term" style="top:1304px">top - 10:08:13 up  1:18,  1 user,  load average: 0.00, 0.00, 0.00
Tasks: 121 total,   2 running, 119 sleeping,   0 stopped,   0 zombie
%Cpu(s):  0.5 us,  0.3 sy,  0.0 ni, 98.8 id,  0.0 wa,  0.2 hi,  0.2 si,  0.0 st
MiB Mem :   3582.1 total,   2596.3 free,    195.3 used,    790.5 buff/cache
MiB Swap:      0.0 total,      0.0 free,      0.0 used.   3149.1 avail Mem
</div>
<div class="a" style="left:1px;top:1405px;width:2321px;height:17px;background:#e0e0e0"></div>
<div class="term" style="top:1406px;color:#1c1c1c">    PID USER      PR  NI    VIRT    RES    SHR S  %CPU  %MEM     TIME+ COMMAND</div>
<div class="term" style="top:1423px">   5383 root      10 -10  125028  28508  16376 S   0.7   0.8   0:16.40 AliYunDunMonito
   5373 root      10 -10   82584  15200  10968 S   0.3   0.4   0:08.46 AliYunDun
  18664 nginx     20   0   10088   3644   1972 S   0.3   0.1   0:00.57 nginx
      1 root      20   0  103516  11368   8448 S   0.0   0.3   0:03.09 systemd
      2 root      20   0       0      0      0 S   0.0   0.0   0:00.00 kthreadd
      3 root       0 -20       0      0      0 I   0.0   0.0   0:00.00 rcu_gp
      4 root       0 -20       0      0      0 I   0.0   0.0   0:00.00 rcu_par_gp
      6 root       0 -20       0      0      0 I   0.0   0.0   0:00.00 kworker/0:0H-events_highpri
      8 root       0 -20       0      0      0 I   0.0   0.0   0:00.00 mm_percpu_wq
      9 root      20   0       0      0      0 S   0.0   0.0   0:00.00 rcu_tasks_rude_
     10 root      20   0       0      0      0 S   0.0   0.0   0:00.00 rcu_tasks_trace
     11 root      20   0       0      0      0 S   0.0   0.0   0:00.11 ksoftirqd/0
     12 root      20   0       0      0      0 I   0.0   0.0   0:00.25 rcu_sched
     13 root      rt   0       0      0      0 S   0.0   0.0   0:00.00 migration/0
     14 root      20   0       0      0      0 S   0.0   0.0   0:00.00 cpuhp/0
     15 root      20   0       0      0      0 S   0.0   0.0   0:00.00 cpuhp/1
     16 root      rt   0       0      0      0 S   0.0   0.0   0:00.09 migration/1
     17 root      20   0       0      0      0 S   0.0   0.0   0:00.06 ksoftirqd/1
     19 root       0 -20       0      0      0 I   0.0   0.0   0:00.00 kworker/1:0H-kblockd
     21 root      20   0       0      0      0 S   0.0   0.0   0:00.00 kdevtmpfs
     22 root       0 -20       0      0      0 I   0.0   0.0   0:00.00 netns
     23 root      20   0       0      0      0 S   0.0   0.0   0:00.00 kauditd
     26 root      20   0       0      0      0 S   0.0   0.0   0:00.00 khungtaskd
     27 root      20   0       0      0      0 S   0.0   0.0   0:00.00 oom_reaper
     28 root       0 -20       0      0      0 I   0.0   0.0   0:00.00 writeback
     29 root      20   0       0      0      0 S   0.0   0.0   0:00.01 kcompactd0
     30 root      25   5       0      0      0 S   0.0   0.0   0:00.00 ksmd
     31 root      39  19       0      0      0 S   0.0   0.0   0:00.02 khugepaged
     32 root       0 -20       0      0      0 I   0.0   0.0   0:00.00 memcg_wmark
     46 root       0 -20       0      0      0 I   0.0   0.0   0:00.00 cryptd
     81 root       0 -20       0      0      0 I   0.0   0.0   0:00.00 kintegrityd
     82 root       0 -20       0      0      0 I   0.0   0.0   0:00.00 kblockd
     83 root       0 -20       0      0      0 I   0.0   0.0   0:00.00 blkcg_punt_bio
     84 root       0 -20       0      0      0 I   0.0   0.0   0:00.00 tpm_dev_wq</div>
<div class="a" style="left:786px;top:1164px;font-size:78px;line-height:90px;color:rgba(0,0,0,0.062);z-index:50">阿里云活动网</div><div class="a" style="left:1296px;top:1156px;font-size:88px;line-height:100px;color:rgba(0,0,0,0.062);z-index:50">aliyunhuodong.com</div>
</body></html>
